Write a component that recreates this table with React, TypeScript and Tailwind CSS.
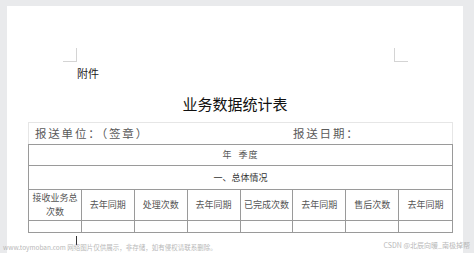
import React from "react";

const cols = ["接收业务总次数", "去年同期", "处理次数", "去年同期", "已完成次数", "去年同期", "售后次数", "去年同期"];

export default function App() {
  return (
    <div
      className="relative w-[474px] h-[253px] overflow-hidden bg-[#e9eaec] pl-[7px] pt-[6px]"
      style={{ fontFamily: '"Noto Sans CJK SC", "Noto Sans", sans-serif' }}
    >
      <div className="w-[456px] h-[247px] bg-white flex flex-col">
        {/* corner marks */}
        <div className="mt-[42px] h-[14px] flex justify-between pl-[56px] pr-[55px]">
          <div className="w-[14px] h-[14px] border-r border-b border-[#d4d4d4]" />
          <div className="w-[14px] h-[14px] border-l border-b border-[#d4d4d4]" />
        </div>
        <div className="mt-[4px] pl-[70px] text-[11px] leading-[14px] text-[#222]">附件</div>
        <div className="mt-[15px] text-center text-[15px] leading-[18px] text-[#111]">业务数据统计表</div>
        <div className="mt-[9px] ml-[21px] w-[425px] flex flex-col text-[#555]">
          <div className="h-[22px] border-t border-x border-[#e6e6e6] flex items-center text-[11.5px] tracking-[1.8px] text-[#5a5a5a]">
            <span className="pl-[6px] w-[264px]">报送单位：（签章）</span>
            <span>报送日期：</span>
          </div>
          <div className="border border-[#9a9a9a] text-[9px] text-[#555]">
            <div className="h-[21px] flex items-center justify-center border-b border-[#9a9a9a] tracking-[1px]">年&nbsp;&nbsp;季度</div>
            <div className="h-[24px] flex items-center justify-center border-b border-[#9a9a9a] text-[#333]">一、总体情况</div>
            <div className="grid grid-cols-8 h-[31px] border-b border-[#9a9a9a]">
              {cols.map((c, i) => (
                <div
                  key={i}
                  className={`flex items-center justify-center text-center leading-[14px] px-[3px] ${i < 7 ? "border-r border-[#9a9a9a]" : ""}`}
                >
                  {c}
                </div>
              ))}
            </div>
            <div className="grid grid-cols-8 h-[11px]">
              {cols.map((_, i) => (
                <div key={i} className={i < 7 ? "border-r border-[#9a9a9a]" : ""} />
              ))}
            </div>
          </div>
          <div className="ml-[48px] mt-[3px] w-px h-[9px] bg-[#333]" />
        </div>
      </div>
      <div className="absolute left-[3px] bottom-[1px] text-[6.5px] leading-[10px] text-[#b8b8b8]">
        www.toymoban.com 网络图片仅供展示，非存储，如有侵权请联系删除。
      </div>
      <div className="absolute right-[4px] bottom-[3px] text-[7px] leading-[10px] text-[#b8b8b8]">
        CSDN @北辰向暖_南极掉帮
      </div>
    </div>
  );
}
